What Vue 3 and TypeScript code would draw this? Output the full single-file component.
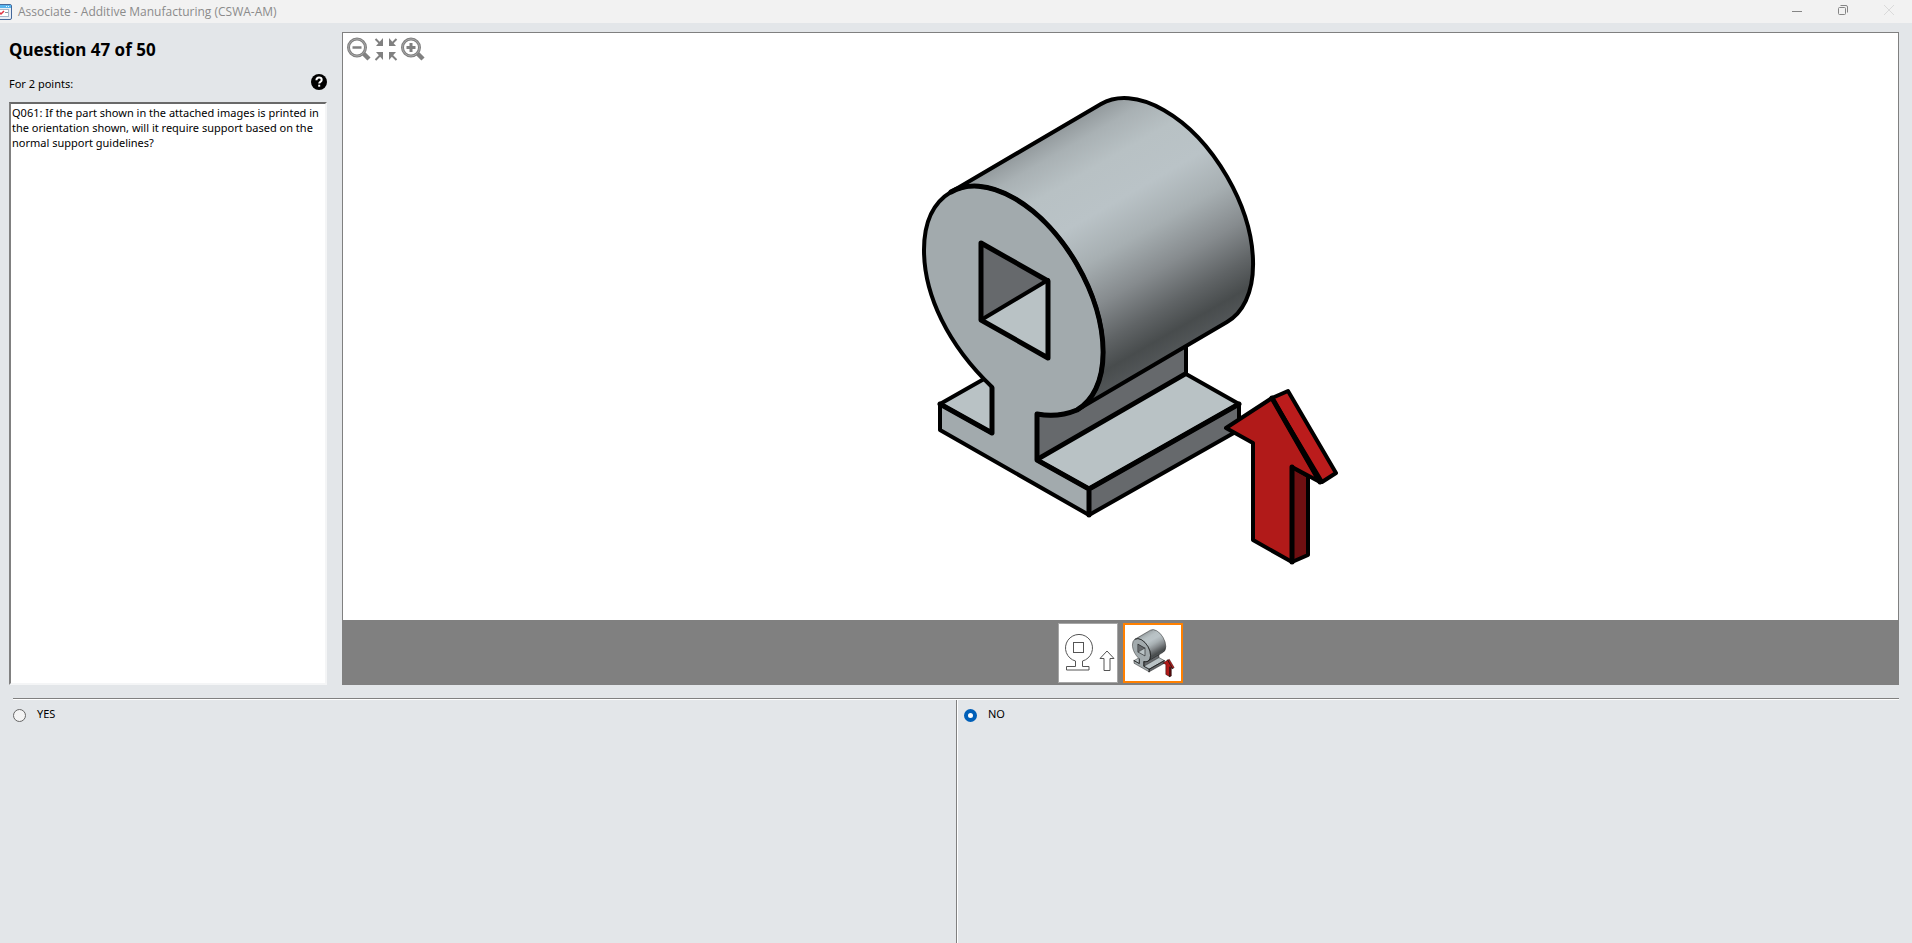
<script setup lang="ts">
import { ref } from 'vue'

interface Answer {
  value: string
  label: string
}

const examTitle = 'Associate - Additive Manufacturing (CSWA-AM)'
const questionText =
  'Q061: If the part shown in the attached images is printed in the orientation shown, will it require support based on the normal support guidelines?'
const answers: Answer[] = [
  { value: 'yes', label: 'YES' },
  { value: 'no', label: 'NO' },
]
const selected = ref<string>('no')
const activeImage = ref<number>(1)
</script>

<template>
  <div class="window">
    <header class="titlebar">
      <svg class="app-icon" viewBox="0 0 16 16" aria-hidden="true">
        <rect x="0.5" y="0.5" width="15" height="15" rx="1.5" fill="#e9eef5" stroke="#44679a" />
        <rect x="1" y="1" width="14" height="3" fill="#58b5ee" />
        <path d="M10 2.5h1M12 2.5h1" stroke="#e8f6ff" />
        <rect x="2.5" y="5.5" width="10" height="7" fill="#fff" stroke="#a9b7c8" />
        <path d="M3 8l2 2 3-3" fill="none" stroke="#e03040" stroke-width="1.5" />
        <path d="M9 8.5h3" stroke="#8a94a0" />
      </svg>
      <span class="title">{{ examTitle }}</span>
      <button class="win-btn" type="button" aria-label="Minimize">
        <svg viewBox="0 0 12 12"><path d="M1 7.5h10" stroke="#858585" /></svg>
      </button>
      <button class="win-btn" type="button" aria-label="Restore">
        <svg viewBox="0 0 12 12" fill="none" stroke="#858585">
          <rect x="1.5" y="3.5" width="7" height="7" rx="1" />
          <path d="M3.5 1.5H9a1.5 1.5 0 0 1 1.5 1.5v5.5" />
        </svg>
      </button>
      <button class="win-btn" type="button" aria-label="Close" disabled>
        <svg viewBox="0 0 12 12"><path d="M1 1l10 10M11 1L1 11" stroke="#dadada" /></svg>
      </button>
    </header>

    <main class="top">
      <section class="question">
        <h1 id="question-heading">Question 47 of 50</h1>
        <div class="points">
          <span>For 2 points:</span>
          <button class="help" type="button" aria-label="Help">
            <svg viewBox="0 0 16 16">
              <circle cx="8" cy="8" r="8" fill="#000" />
              <path d="M5.4 6.2C5.5 4.4 6.5 3.6 8 3.6c1.6 0 2.7.9 2.7 2.3 0 1.9-2.5 1.9-2.5 3.5" fill="none" stroke="#fff" stroke-width="2" />
              <rect x="7.2" y="10.7" width="2" height="2" fill="#fff" />
            </svg>
          </button>
        </div>
        <textarea class="prompt" readonly aria-labelledby="question-heading" :value="questionText"></textarea>
      </section>

      <section class="viewer">
        <div class="canvas">
          <div class="tools">
            <button type="button" aria-label="Zoom out">
              <svg viewBox="0 0 24 24" fill="none" stroke="#808080">
                <path d="M16 16l6 6" stroke-width="4.5" />
                <circle cx="10" cy="10.5" r="8.5" stroke-width="3" />
                <circle cx="10" cy="10.5" r="8.5" stroke="#a8a8a8" />
                <path d="M5.5 10.5h9" stroke-width="2.5" />
              </svg>
            </button>
            <button type="button" aria-label="Fit to view">
              <svg viewBox="0 0 24 24" fill="none" stroke="#808080" stroke-width="2">
                <path d="M1.5 2l5 5M22.5 2l-5 5M1.5 23l5-5M22.5 23l-5-5" />
                <path d="M9 1v8H2zM15 1v8h7zM9 23v-8H2zM15 23v-8h7z" fill="#808080" stroke="none" />
              </svg>
            </button>
            <button type="button" aria-label="Zoom in">
              <svg viewBox="0 0 24 24" fill="none" stroke="#808080">
                <path d="M16 16l6 6" stroke-width="4.5" />
                <circle cx="10" cy="10.5" r="8.5" stroke-width="3" />
                <circle cx="10" cy="10.5" r="8.5" stroke="#a8a8a8" />
                <path d="M5.5 10.5h9M10 6v9" stroke-width="3" />
              </svg>
            </button>
          </div>
          <svg class="drawing" viewBox="343 33 1555 587" role="img" aria-label="Isometric view of the part">
            <defs>
              <linearGradient id="barrel" gradientUnits="userSpaceOnUse" x1="951" y1="192" x2="1077" y2="410">
                <stop offset="0" stop-color="#939a9d" />
                <stop offset="0.08" stop-color="#a9b1b4" />
                <stop offset="0.2" stop-color="#b8c1c4" />
                <stop offset="0.36" stop-color="#bac3c7" />
                <stop offset="0.52" stop-color="#a7afb2" />
                <stop offset="0.68" stop-color="#868b8e" />
                <stop offset="0.82" stop-color="#606466" />
                <stop offset="0.92" stop-color="#484c4d" />
                <stop offset="1" stop-color="#535759" />
              </linearGradient>
              <g id="part" stroke="#000" stroke-width="4" stroke-linejoin="round" stroke-linecap="round">
                <path d="M1037 459V400L1186 336V373z" fill="#66696c" />
                <path d="M951 192L1101 104A121 70 60 0 1 1227 322L1077 410z" fill="url(#barrel)" />
                <path d="M1037 460L1186 374L1239 404L1089 489z" fill="#b9c2c5" />
                <path d="M1089 489L1239 404V430L1089 515z" fill="#66696c" />
                <path d="M940 404L984 379L1000 390V438z" fill="#b9c2c5" />
                <path d="M1037 414Q1058 418 1077 410A121 70 60 0 0 951 192Q924 208 924 250C924 295 948 345 992 387V433L940 404V430L1089 515V489L1037 460z" fill="#a2aaad" />
                <path d="M951 192A121 70 60 0 1 1077 410Q1058 418 1037 414V460L1089 489V515M940 404L992 433V388M1089 489L1239 404" fill="none" stroke-width="5" />
                <path d="M981 242L1048 280L981 320z" fill="#66696c" stroke="none" />
                <path d="M981 320L1048 280V359z" fill="#b9c2c5" stroke="none" />
                <path d="M981 320L1048 280" />
                <path d="M981 243L1048 281V358L981 320z" fill="none" stroke-width="5" />
                <path d="M1292 467L1308 476V555L1292 562z" fill="#6e0f11" />
                <path d="M1272 398L1288 391L1336 473L1322 482z" fill="#bb1c1c" />
                <path d="M1226 428L1272 398L1320 482L1292 467V562L1253 540V443z" fill="#b11a19" />
                <path d="M1272 398L1320 482M1292 467V562" fill="none" stroke-width="5" />
              </g>
            </defs>
            <use href="#part" />
          </svg>
        </div>

        <nav class="strip" aria-label="Attached images">
          <button type="button" class="thumb" :class="{ active: activeImage === 0 }" aria-label="Front view" @click="activeImage = 0">
            <svg viewBox="0 0 56 56" fill="none" stroke="#555">
              <path d="M15.5 36a13.5 13.5 0 1 1 7 0v5.5h6.5v3.5H6.500v-3.500h9z" />
              <rect x="13.5" y="17.5" width="10" height="10" />
              <path d="M47 26l7 7.500h-4V45.500h-6V33.500h-4z" />
            </svg>
          </button>
          <button type="button" class="thumb" :class="{ active: activeImage === 1 }" aria-label="Isometric view" @click="activeImage = 1">
            <svg viewBox="851 53 552 552"><use href="#part" /></svg>
          </button>
        </nav>
      </section>
    </main>

    <section class="answers" role="radiogroup" aria-labelledby="question-heading">
      <div v-for="a in answers" :key="a.value" class="answer">
        <input :id="'answer-' + a.value" v-model="selected" type="radio" name="answer" :value="a.value" />
        <label :for="'answer-' + a.value">{{ a.label }}</label>
      </div>
    </section>
  </div>
</template>

<style>
html,
body {
  margin: 0;
  background: #e3e6e9;
}
</style>

<style scoped>
.window {
  display: grid;
  grid-template-rows: 23px minmax(0, 675fr) minmax(0, 245fr);
  grid-template-columns: minmax(0, 1fr);
  height: 100vh;
  overflow: hidden;
  background: #e3e6e9;
  color: #000;
  font-family: "Noto Sans", "Open Sans", sans-serif;
  font-size: 11px;
  line-height: 15px;
}

.window *,
.window {
  box-sizing: border-box;
}

button {
  padding: 0;
  border: 0;
  background: none;
  font: inherit;
}

svg {
  display: block;
}

.titlebar {
  display: flex;
  align-items: center;
  background: #f2f2f2;
  color: #8b8b8b;
  font-family: "Open Sans", "Noto Sans", sans-serif;
  font-size: 12px;
}

.app-icon {
  flex: none;
  width: 16px;
  height: 16px;
  margin-left: -4px;
}

.title {
  flex: 1;
  padding-left: 6px;
}

.win-btn {
  display: grid;
  place-items: center;
  width: 46px;
  height: 20px;
  align-self: flex-start;
}

.win-btn svg {
  width: 12px;
  height: 12px;
}

.top {
  display: grid;
  grid-template-columns: 318px minmax(0, 1fr);
  gap: 15px;
  padding: 9px 13px 13px 9px;
}

.question {
  display: flex;
  flex-direction: column;
  min-height: 0;
}

h1 {
  margin: 6px 0 0;
  font-size: 17px;
  line-height: 24px;
  font-weight: 700;
}

.points {
  display: flex;
  align-items: center;
  justify-content: space-between;
  height: 20px;
  margin: 10px 0;
}

.points span {
  padding-top: 2px;
}

.help svg {
  width: 16px;
  height: 16px;
}

.prompt {
  flex: 1;
  width: 100%;
  margin: 0;
  padding: 1px;
  border: 2px solid;
  border-color: #696969 #f4f5f6 #f4f5f6 #808080;
  border-radius: 0;
  outline: 0;
  resize: none;
  background: #fff;
  color: #000;
  font: inherit;
}

.viewer {
  display: flex;
  flex-direction: column;
  min-height: 0;
}

.canvas {
  position: relative;
  flex: 1;
  min-height: 0;
  border: 1px solid #808080;
  border-bottom: 0;
  background: #fff;
}

.tools {
  position: absolute;
  top: 4px;
  left: 4px;
  display: flex;
  gap: 3px;
}

.tools svg {
  width: 24px;
  height: 24px;
}

.drawing {
  width: 100%;
  height: 100%;
}

.strip {
  display: flex;
  justify-content: center;
  align-items: center;
  gap: 5px;
  height: 65px;
  background: #808080;
}

.thumb {
  width: 60px;
  height: 60px;
  border: 1px solid #a6a6a6;
  padding: 1px;
  background: #fff;
}

.thumb.active {
  border: 2px solid #ff8000;
  padding: 0;
}

.answers {
  display: grid;
  grid-template-columns: repeat(2, minmax(0, 1fr));
  margin: 0 13px;
  border-top: 1px solid #808080;
  box-shadow: inset 0 1px #fff;
}

.answer {
  display: flex;
  align-items: flex-start;
  gap: 11px;
  margin-top: 1px;
  padding-top: 6px;
}

.answer + .answer {
  padding-left: 7px;
  border-left: 1px solid #808080;
  box-shadow: inset 1px 0 #fff;
}

.answer input {
  appearance: none;
  width: 13px;
  height: 13px;
  margin: 3px 0 0;
  border: 1px solid #666;
  border-radius: 50%;
  background: #f4f4f4;
}

.answer input:checked {
  border: 4px solid #005fb8;
  background: #fff;
}
</style>
